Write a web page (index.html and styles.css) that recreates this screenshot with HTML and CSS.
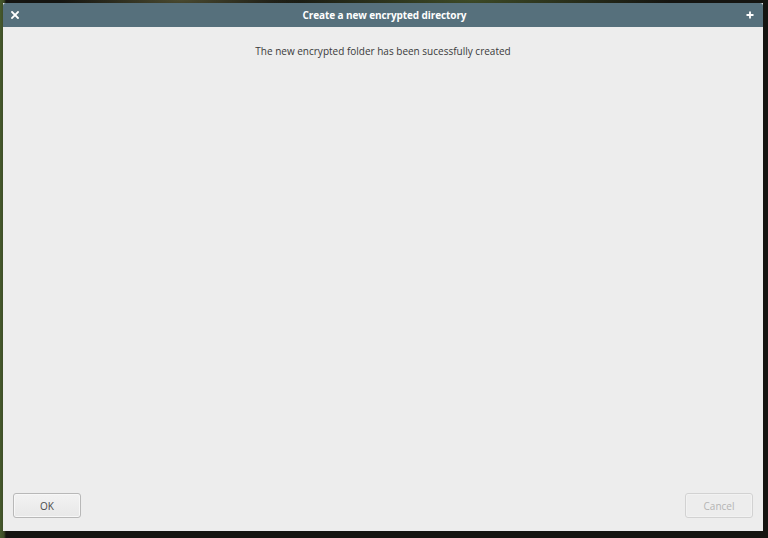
FILE: index.html
```html
<!DOCTYPE html>
<html>
<head>
<meta charset="utf-8">
<link rel="stylesheet" href="styles.css">
</head>
<body>
<div class="desktop">
  <div class="window">
    <div class="titlebar">
      <span class="tb-btn close">
        <svg width="8" height="8" viewBox="0 0 8 8"><path d="M1 1 L7 7 M7 1 L1 7" stroke="#fff" stroke-width="1.8" stroke-linecap="square"/></svg>
      </span>
      <span class="title">Create a new encrypted directory</span>
      <span class="tb-btn plus">
        <svg width="8" height="8" viewBox="0 0 8 8"><path d="M4 0.5 V7.5 M0.5 4 H7.5" stroke="#fff" stroke-width="1.8"/></svg>
      </span>
    </div>
    <div class="body">
      <p class="message">The new encrypted folder has been sucessfully created</p>
      <div class="actions">
        <button class="btn ok">OK</button>
        <button class="btn cancel" disabled>Cancel</button>
      </div>
    </div>
  </div>
</div>
</body>
</html>
```
FILE: styles.css
```css
html, body {
  margin: 0;
  padding: 0;
  width: 768px;
  height: 538px;
  overflow: hidden;
}
.desktop {
  width: 768px;
  height: 538px;
  box-sizing: border-box;
  padding: 3px 5px 7px 3px;
  background:
    radial-gradient(ellipse 200px 30px at 470px 0px, #3d4a26 0%, rgba(0,0,0,0) 100%),
    radial-gradient(ellipse 120px 20px at 180px 0px, #4a4a30 0%, rgba(0,0,0,0) 100%),
    linear-gradient(90deg, #465a2c 0px, #3c4a26 4px, #151511 6px, #151511 100%);
}
.window {
  width: 760px;
  height: 528px;
  display: flex;
  flex-direction: column;
  background: #ededed;
  font-family: "Open Sans", "DejaVu Sans", sans-serif;
}
.titlebar {
  height: 24px;
  flex: none;
  background: #56707c;
  display: flex;
  align-items: center;
  justify-content: space-between;
  padding: 0 9px 0 8px;
  border-radius: 3px 3px 0 0;
}
.tb-btn {
  width: 8px;
  height: 8px;
  display: flex;
}
.title {
  color: #fff;
  font-weight: bold;
  font-size: 10px;
  letter-spacing: -0.1px;
  margin-left: 4px;
}
.body {
  flex: 1;
  display: flex;
  flex-direction: column;
  padding: 0 10px 13px 10px;
}
.message {
  margin: 16px 0 0 0;
  text-align: center;
  color: #3a3a3a;
  font-size: 10px;
  line-height: 16px;
}
.actions {
  margin-top: auto;
  display: flex;
  justify-content: space-between;
}
.btn {
  width: 68px;
  height: 25px;
  box-sizing: border-box;
  border: 1px solid #b8b8b8;
  border-radius: 3px;
  background: linear-gradient(#f2f2f2, #e8e8e8);
  box-shadow: inset 0 0 0 1px #f7f7f7;
  font-family: "Open Sans", "DejaVu Sans", sans-serif;
  font-size: 10px;
  color: #4a4a4a;
  padding: 0;
}
.cancel {
  border-color: #d2d2d2;
  color: #b4b4b4;
  background: #ededed;
  box-shadow: inset 0 0 0 1px #f2f2f2;
}
```
